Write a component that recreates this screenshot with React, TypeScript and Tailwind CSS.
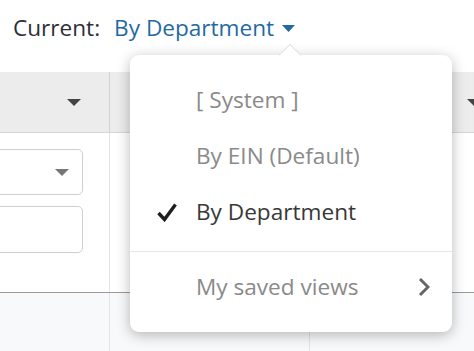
import React from 'react'

type CaretProps = {
  className?: string
  width?: number
  height?: number
}

const Caret = ({ className, width = 13, height = 7 }: CaretProps): JSX.Element => (
  <svg className={className} width={width} height={height} viewBox={`0 0 ${width} ${height}`}>
    <polygon points={`0,0 ${width},0 ${width / 2},${height}`} fill="currentColor" />
  </svg>
)

const MenuItem = ({ children, checked }: { children: React.ReactNode; checked?: boolean }): JSX.Element => {
  if (checked) {
    return (
      <div className="flex h-[56px] items-center pl-[27px] text-[#383838]">
        <svg className="mr-[19px]" width="20" height="20" viewBox="0 0 20 20">
          <path d="M1.5 11 L7.5 17.5 L18.5 2.5" fill="none" stroke="#1e1e1e" strokeWidth="3.4" />
        </svg>
        {children}
      </div>
    )
  }

  return <div className="flex h-[56px] items-center pl-[66px] text-[#8a8a8a]">{children}</div>
}

export default function App(): JSX.Element {
  return (
    <div className="relative h-[351px] w-[474px] overflow-hidden bg-white font-['Open_Sans',sans-serif]">
      {/* view picker */}
      <div className="flex h-[72px] items-start pl-[13px] pt-[13px] text-[22.6px] leading-[30px]">
        <span className="text-[#2e2e36]">Current:</span>
        <button className="ml-[14px] flex items-center text-[#1f6aa3]">
          By Department
          <Caret className="ml-[8px] mt-[1px]" />
        </button>
      </div>

      {/* table behind the menu */}
      <div className="w-[500px]">
        <div className="grid h-[61px] grid-cols-[110px_390px] border-b border-[#d6d6d6] bg-[#ececec]">
          <div className="flex items-center justify-end border-r border-[#d2d2d2] pr-[28px] text-[#444]">
            <Caret width={14} height={7} />
          </div>
          <div className="flex items-center justify-end pr-[19px] text-[#444]">
            <Caret width={14} height={7} />
          </div>
        </div>
        <div className="grid h-[160px] grid-cols-[110px_390px] border-b border-[#9a9a9a]">
          <div className="border-r border-[#e3e3e3] pt-[16px]">
            <div className="-ml-[17px] flex h-[46px] w-[100px] items-center justify-end rounded-[5px] border border-[#cfcfcf] pr-[13px] text-[#777]">
              <Caret width={14} height={7} />
            </div>
            <div className="-ml-[17px] mt-[11px] h-[47px] w-[100px] rounded-[5px] border border-[#cfcfcf]" />
          </div>
          <div />
        </div>
        <div className="grid h-[60px] grid-cols-[110px_200px_190px] bg-[#f8f9fa]">
          <div className="border-r border-[#e3e3e3]" />
          <div className="border-r border-[#e3e3e3]" />
          <div />
        </div>
      </div>

      {/* dropdown menu */}
      <div className="absolute left-[130px] top-[55px] w-[322px] rounded-[9px] bg-white pb-[10px] pt-[17px] text-[22.6px] leading-[30px] shadow-[0_3px_14px_rgba(0,0,0,0.28)]">
        <div className="absolute left-[152px] top-[-8px] h-[16px] w-[16px] rotate-45 border-l border-t border-[#e2e2e2] bg-white" />
        <MenuItem>[ System ]</MenuItem>
        <MenuItem>By EIN (Default)</MenuItem>
        <MenuItem checked>By Department</MenuItem>
        <div className="mt-[11px] border-t border-[#e6e6e6]" />
        <div className="flex h-[70px] items-center justify-between pl-[66px] pr-[22px] text-[#8a8a8a]">
          My saved views
          <svg width="12" height="20" viewBox="0 0 12 20">
            <path d="M2 2 L10 10 L2 18" fill="none" stroke="#666" strokeWidth="3" />
          </svg>
        </div>
      </div>
    </div>
  )
}
